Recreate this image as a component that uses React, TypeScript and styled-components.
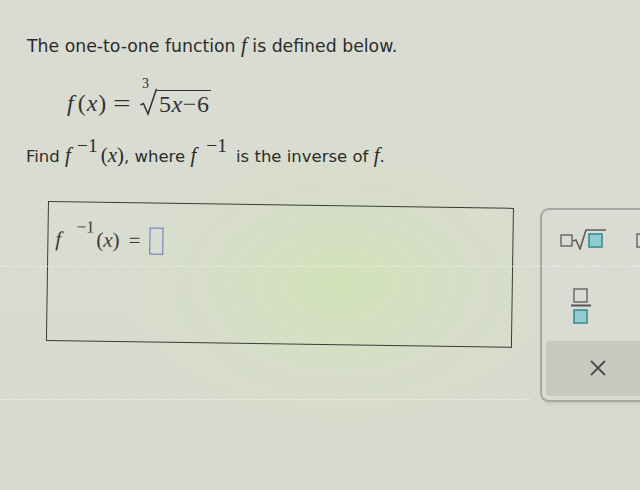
import React from "react";
import styled, { createGlobalStyle } from "styled-components";

const Global = createGlobalStyle`
  html, body { margin: 0; padding: 0; }
  body {
    width: 640px; height: 490px; overflow: hidden;
    background: radial-gradient(ellipse 230px 150px at 340px 285px, #d2e2b8 0%, #d7ddc9 60%, rgba(217,221,208,0) 100%),
      linear-gradient(180deg, #dadcd3 0%, #d8dcd0 60%, #d6dacd 100%);
    font-family: "DejaVu Sans", "Liberation Sans", sans-serif;
    color: #2b2c2a;
  }
`;

const Page = styled.div`
  position: relative;
  width: 640px;
  height: 490px;
  padding: 34px 0 0 26px;
  box-sizing: border-box;
  overflow: hidden;
`;

const Title = styled.div<{ $size: number }>`
  font-size: ${(p) => p.$size}px;
  line-height: 22px;
  white-space: nowrap;
  padding-left: 1px;
`;

const MathI = styled.span<{ $size?: number }>`
  font-family: "Liberation Serif", "DejaVu Serif", serif;
  font-style: italic;
  font-size: ${(p) => p.$size ?? 20}px;
`;

const Formula = styled.div`
  margin: 24px 0 0 41px;
  height: 36px;
  display: flex;
  align-items: flex-end;
  font-family: "Liberation Serif", "DejaVu Serif", serif;
  font-size: 24px;
  color: #333;
`;

const Gap = styled.span<{ $w: number }>`
  display: inline-block;
  width: ${(p) => p.$w}px;
`;

const Root = styled.span`
  display: inline-flex;
  align-items: flex-end;
  position: relative;
`;

const RootIndex = styled.span`
  position: absolute;
  left: 2px;
  top: -12px;
  font-size: 14px;
`;

const Radicand = styled.span`
  border-top: 1.5px solid #333;
  padding: 0 1px 0 2px;
  line-height: 26px;
  letter-spacing: 0.6px;
`;

const Equals = styled.span`
  display: inline-block;
  transform: scaleX(1.3);
  margin: 0 2px;
`;

const FindLine = styled.div`
  margin-top: 27px;
  display: flex;
  align-items: baseline;
  font-size: 16.5px;
  line-height: 22px;
  white-space: nowrap;
`;

const Sup = styled.span<{ $ml: number }>`
  font-family: "Liberation Serif", "DejaVu Serif", serif;
  font-size: 19.5px;
  position: relative;
  top: -10px;
  margin-left: ${(p) => p.$ml}px;
`;

const Paren = styled.span`
  font-family: "Liberation Serif", "DejaVu Serif", serif;
  font-size: 21px;
  margin-left: 3px;
`;

const Work = styled.div`
  display: flex;
  align-items: flex-start;
  margin-top: 33px;
`;

const AnswerBox = styled.div`
  flex-shrink: 0;
  margin-left: 22px;
  width: 466px;
  height: 140px;
  border: 1.5px solid #3a3b38;
  box-sizing: border-box;
  padding: 22px 0 0 7px;
  transform: rotate(0.85deg);
  transform-origin: left top;
`;

const AnsMath = styled.div`
  display: flex;
  align-items: center;
  font-family: "Liberation Serif", "DejaVu Serif", serif;
  font-size: 21px;
  color: #3a3a3a;
  height: 30px;
`;

const SmallSup = styled.span`
  font-size: 17px;
  align-self: flex-start;
  margin: -7px 0 0 15px;
`;

const Blank = styled.span`
  display: inline-block;
  width: 12px;
  height: 25px;
  border: 1.5px solid #6a70c8;
  margin-left: 9px;
`;

const Keypad = styled.div`
  flex-shrink: 0;
  margin-left: 26px;
  margin-top: 7px;
  width: 120px;
  height: 194px;
  border: 2px solid #a6a9a2;
  border-right: none;
  border-radius: 9px 0 0 9px;
  box-sizing: border-box;
  background: #dadcd4;
  display: flex;
  flex-direction: column;
  overflow: hidden;
  box-shadow: 1px 2px 3px rgba(0,0,0,0.08);
`;

const KeyRow = styled.div<{ $h: number; $pl: number; $pt?: number }>`
  height: ${(p) => p.$h}px;
  display: flex;
  align-items: center;
  padding-left: ${(p) => p.$pl}px;
  padding-top: ${(p) => p.$pt ?? 0}px;
  box-sizing: border-box;
  gap: 26px;
`;

const ClearRow = styled.div`
  margin: auto 0 4px 4px;
  height: 56px;
  background: #c8cac2;
  border-radius: 4px 0 0 4px;
  display: flex;
  align-items: center;
  padding-left: 43px;
`;

const Artifact = styled.div<{ $top: number; $w: number }>`
  position: absolute;
  left: 0;
  top: ${(p) => p.$top}px;
  width: ${(p) => p.$w}px;
  height: 0;
  border-top: 1px dashed rgba(245, 248, 240, 0.55);
`;

const SqrtKey = () => (
  <svg width="50" height="22" viewBox="0 0 50 22">
    <rect x="1" y="7" width="11" height="11" fill="none" stroke="#6f736e" strokeWidth="1.6" />
    <path d="M13 13 L16 12 L20 21 L26 2 L46 2" fill="none" stroke="#5a5e5a" strokeWidth="1.6" />
    <rect x="29" y="6" width="13" height="13" fill="#8fcdd0" stroke="#3b8c93" strokeWidth="1.6" />
  </svg>
);

const FracKey = () => (
  <svg width="22" height="38" viewBox="0 0 22 38">
    <rect x="4" y="1" width="13" height="13" fill="none" stroke="#6f736e" strokeWidth="1.6" />
    <line x1="1" y1="17.5" x2="21" y2="17.5" stroke="#555" strokeWidth="1.8" />
    <rect x="4" y="22" width="13" height="13" fill="#8fcdd0" stroke="#3b8c93" strokeWidth="1.6" />
  </svg>
);

const PartialKey = () => (
  <svg width="14" height="22" viewBox="0 0 14 22">
    <rect x="1" y="6" width="12" height="13" fill="none" stroke="#6f736e" strokeWidth="1.6" />
  </svg>
);

const XIcon = () => (
  <svg width="18" height="18" viewBox="0 0 18 18">
    <path d="M2 2 L16 16 M16 2 L2 16" stroke="#4a4d4a" strokeWidth="1.8" fill="none" />
  </svg>
);

export default function App() {
  return (
    <>
      <Global />
      <Page>
        <Title $size={17.3}>
          The one-to-one function <MathI $size={21}>f</MathI> is defined below.
        </Title>
        <Formula>
          <MathI $size={24}>f</MathI>
          <Gap $w={4} />
          <span>(</span>
          <Gap $w={1} />
          <MathI $size={24}>x</MathI>
          <Gap $w={1} />
          <span>)</span>
          <Gap $w={7} />
          <Equals>=</Equals>
          <Gap $w={9} />
          <Root>
            <RootIndex>3</RootIndex>
            <svg width="17" height="28" viewBox="0 0 17 28" style={{ marginBottom: 1 }}>
              <path d="M0.5 17 L3.5 15.5 L8 26 L16.5 0.8" fill="none" stroke="#333" strokeWidth="1.5" />
            </svg>
            <Radicand>
              5<MathI $size={24}>x</MathI>−6
            </Radicand>
          </Root>
        </Formula>
        <FindLine>
          Find&nbsp;<MathI $size={21}>f</MathI>
          <Sup $ml={6}>−1</Sup>
          <Paren>
            (<i>x</i>)
          </Paren>
          ,&nbsp;where&nbsp;<MathI $size={21}>f</MathI>
          <Sup $ml={10}>−1</Sup>
          <Gap $w={9} />
          is the inverse of&nbsp;<MathI $size={21}>f</MathI>.
        </FindLine>
        <Work>
          <AnswerBox>
            <AnsMath>
              <i>f</i>
              <SmallSup>−1</SmallSup>
              <Gap $w={2} />
              <span>(</span>
              <i>x</i>
              <span>)</span>
              <Gap $w={9} />
              <span>=</span>
              <Blank />
            </AnsMath>
          </AnswerBox>
          <Keypad>
            <KeyRow $h={58} $pl={18}>
              <SqrtKey />
              <PartialKey />
            </KeyRow>
            <KeyRow $h={74} $pl={28} $pt={6}>
              <FracKey />
            </KeyRow>
            <ClearRow>
              <XIcon />
            </ClearRow>
          </Keypad>
        </Work>
        <Artifact $top={266} $w={640} />
        <Artifact $top={399} $w={530} />
      </Page>
    </>
  );
}
